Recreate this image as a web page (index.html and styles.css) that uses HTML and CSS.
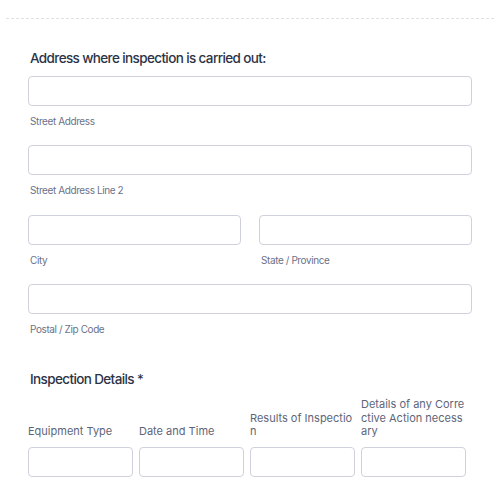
FILE: index.html
```html
<!DOCTYPE html>
<html lang="en">
<head>
    <meta charset="UTF-8">
    <title>Inspection Form</title>
    <link rel="stylesheet" href="styles.css">
</head>
<body>
    <div class="form-page">
        <div class="divider"></div>

        <!-- Address block -->
        <div class="form-section address">
            <label class="field-title">Address where inspection is carried out:</label>

            <div class="field">
                <input class="text-input" type="text">
                <span class="sub-label">Street Address</span>
            </div>

            <div class="field">
                <input class="text-input" type="text">
                <span class="sub-label">Street Address Line 2</span>
            </div>

            <div class="field-row">
                <div class="field">
                    <input class="text-input" type="text">
                    <span class="sub-label">City</span>
                </div>
                <div class="field">
                    <input class="text-input" type="text">
                    <span class="sub-label">State / Province</span>
                </div>
            </div>

            <div class="field">
                <input class="text-input" type="text">
                <span class="sub-label">Postal / Zip Code</span>
            </div>
        </div>

        <!-- Inspection details table -->
        <div class="form-section details">
            <label class="field-title">Inspection Details <span class="required">*</span></label>

            <div class="matrix">
                <div class="col-head">Equipment Type</div>
                <div class="col-head">Date and Time</div>
                <div class="col-head">Results of Inspection</div>
                <div class="col-head">Details of any Corrective Action necessary</div>

                <input class="text-input" type="text">
                <input class="text-input" type="text">
                <input class="text-input" type="text">
                <input class="text-input" type="text">
            </div>
        </div>
    </div>
</body>
</html>
```

FILE: styles.css
```css
/* --- General --- */
* {
    margin: 0;
    padding: 0;
    box-sizing: border-box;
}

body {
    background: #fff;
    font-family: Inter, 'Noto Sans', sans-serif;
    color: #2c3345;
}

.form-page {
    width: 500px;
    padding-top: 18px;
}

.divider {
    margin: 0 6px;
    border-top: 1px dashed #dfe1e7;
}

/* --- Sections --- */
.form-section {
    padding: 0 28px;
}

.address {
    padding-top: 30px;
}

.details {
    padding-top: 17px;
}

.field-title {
    display: block;
    padding-left: 2px;
    font-size: 13.5px;
    line-height: 18px;
    font-weight: 500;
    letter-spacing: -0.62px;
    color: #2c3345;
    margin-bottom: 9px;
}

.details .field-title {
    margin-bottom: 10px;
}

.required {
    font-weight: 400;
}

.field {
    display: flex;
    flex-direction: column;
    margin-bottom: 17.3px;
}

.field-row {
    display: flex;
    gap: 18px;
}

.field-row .field {
    flex: 1;
}

.text-input {
    width: 100%;
    height: 30px;
    border: 1px solid #cfd2dd;
    border-radius: 4px;
    background: #fff;
    outline: none;
}

.sub-label {
    margin-top: 8px;
    padding-left: 2px;
    font-size: 10px;
    line-height: 14px;
    letter-spacing: -0.4px;
    color: #6b7288;
}

/* --- Matrix --- */
.matrix {
    display: grid;
    grid-template-columns: repeat(4, 105px);
    column-gap: 6px;
    row-gap: 8px;
}

.col-head {
    align-self: end;
    font-size: 11px;
    line-height: 13.5px;
    color: #5d6579;
    word-break: break-all;
}
```
